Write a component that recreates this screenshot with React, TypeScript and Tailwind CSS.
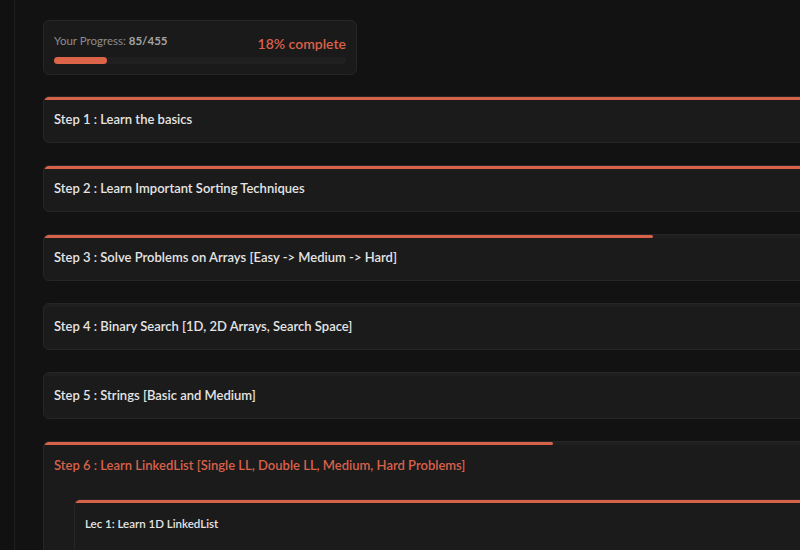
import React from "react";

const STEPS = [
  { title: "Step 1 : Learn the basics", pct: 100 },
  { title: "Step 2 : Learn Important Sorting Techniques", pct: 100 },
  { title: "Step 3 : Solve Problems on Arrays [Easy -> Medium -> Hard]", pct: 61 },
  { title: "Step 4 : Binary Search [1D, 2D Arrays, Search Space]", pct: 0 },
  { title: "Step 5 : Strings [Basic and Medium]", pct: 0 },
];

function TopBar({ pct }: { pct: number }) {
  return (
    <div className="h-[3px] w-full shrink-0 bg-[#1f1f20] rounded-t-md overflow-hidden">
      <div className="h-full bg-[#d8614a] rounded-r-full" style={{ width: `${pct}%` }} />
    </div>
  );
}

export default function App() {
  return (
    <div
      className="w-[800px] h-[550px] overflow-hidden bg-[#121213] flex"
      style={{ fontFamily: "Lato, 'Noto Sans', sans-serif" }}
    >
      <div className="w-[15px] shrink-0 border-r border-[#1f1f21] bg-[#111112]" />
      <div className="pl-[28px] pt-[20px] flex flex-col">
        <div className="shrink-0 w-[314px] h-[55px] rounded-md border border-[#262628] bg-[#1a1a1b] px-[10px] pt-[11px]">
          <div className="flex justify-between items-end">
            <span className="text-[11.5px] text-[#8c8c8c] leading-[18px]">
              Your Progress: <span className="font-bold text-[#a3a3a3]">85/455</span>
            </span>
            <span className="text-[14px] font-semibold text-[#d8614a] leading-[18px] -mb-[3px]">18% complete</span>
          </div>
          <div className="mt-[7px] h-[7px] w-full rounded-full bg-[#202021]">
            <div className="h-full w-[18%] rounded-full bg-[#dc6448]" />
          </div>
        </div>

        <div className="mt-[21px] w-[1000px] flex flex-col gap-[22px]">
          {STEPS.map((s) => (
            <div key={s.title} className="shrink-0 h-[47px] rounded-md border border-[#262628] bg-[#1b1b1c] overflow-hidden flex flex-col">
              <TopBar pct={s.pct} />
              <div className="flex-1 flex items-center px-[10px] pb-[2px] text-[13px] font-semibold text-[#e4e4e4]">
                {s.title}
              </div>
            </div>
          ))}
          <div className="shrink-0 rounded-md border border-[#262628] bg-[#1b1b1c] overflow-hidden flex flex-col h-[200px]">
            <TopBar pct={51} />
            <div className="h-[44px] shrink-0 flex items-center px-[10px] pb-[2px] text-[13px] font-semibold text-[#d8614a]">
              Step 6 : Learn LinkedList [Single LL, Double LL, Medium, Hard Problems]
            </div>
            <div className="shrink-0 ml-[30px] mt-[10px] h-[55px] rounded-md border border-[#262628] bg-[#1b1b1c] overflow-hidden flex flex-col">
              <div className="h-[3px] w-full bg-[#d8614a]" />
              <div className="h-[44px] flex items-center px-[10px] pb-[2px] text-[11.5px] font-semibold text-[#e4e4e4]">
                Lec 1: Learn 1D LinkedList
              </div>
            </div>
          </div>
        </div>
      </div>
    </div>
  );
}
